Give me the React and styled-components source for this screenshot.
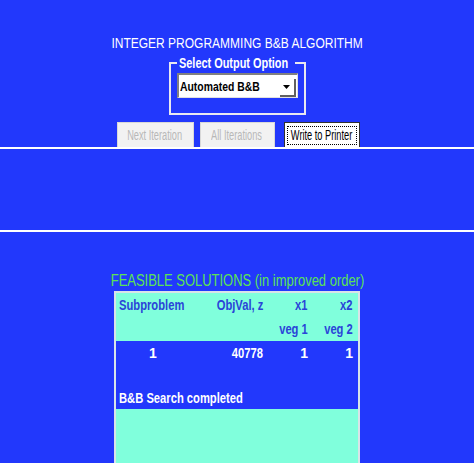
import React from "react";
import styled, { createGlobalStyle } from "styled-components";

const columns = ["74px", "73px", "45px", "45px"];

const GlobalStyle = createGlobalStyle`
  html, body {
    margin: 0;
    padding: 0;
    background: #2238fc;
  }
`;

const Page = styled.div`
  width: 474px;
  height: 463px;
  overflow: hidden;
  background: #2238fc;
  font-family: "Liberation Sans", Arial, sans-serif;
  display: flex;
  flex-direction: column;
  align-items: center;
`;

// condensed look of the original UI font
const Narrow = styled.span`
  display: inline-block;
  white-space: nowrap;
  transform: scaleX(${(p) => p.scale || 0.8});
  transform-origin: ${(p) => p.origin || "center"};
`;

const Title = styled.h1`
  margin: 34px 0 0;
  font-size: 15px;
  font-weight: normal;
  color: #ffffff;
  line-height: 18px;
`;

const OptionBox = styled.fieldset`
  box-sizing: border-box;
  width: 135px;
  height: 59px;
  margin: 4px 0 0;
  padding: 0 6px;
  border: 2px solid #e8e8f0;
  display: flex;
  justify-content: center;
`;

const Legend = styled.legend`
  width: 114px;
  padding: 0 2px;
  font-size: 14px;
  font-weight: bold;
  color: #ffffff;
  line-height: 14px;
  white-space: nowrap;
`;

const SelectBox = styled.div`
  box-sizing: border-box;
  width: 121px;
  height: 25px;
  margin-top: 3px;
  background: #ffffff;
  border-top: 2px solid #808080;
  border-left: 2px solid #808080;
  border-right: 1px solid #e0e0e0;
  border-bottom: 1px solid #e0e0e0;
  display: flex;
  align-items: center;
  justify-content: space-between;
  padding-left: 1px;
`;

const SelectText = styled.span`
  font-size: 13px;
  font-weight: bold;
  color: #000000;
`;

const ArrowButton = styled.span`
  box-sizing: border-box;
  width: 16px;
  height: 18px;
  margin: 3px 1px 0 0;
  background: #ffffff;
  border-right: 2px solid #606060;
  border-bottom: 2px solid #606060;
  display: flex;
  align-items: center;
  justify-content: center;
`;

const ButtonRow = styled.div`
  display: flex;
  align-items: flex-end;
  gap: 6px;
  margin-top: 7px;
  margin-left: 2px;
`;

const Button = styled.button`
  box-sizing: border-box;
  width: ${(p) => p.width}px;
  height: 25px;
  margin-right: ${(p) => p.gapAfter || 0}px;
  background: ${(p) => (p.focused ? "#ffffff" : "#f2f2f2")};
  border: 1px solid ${(p) => (p.focused ? "#303030" : "#d8d8d8")};
  border-bottom: none;
  font-family: "Liberation Sans", Arial, sans-serif;
  font-size: 14px;
  color: ${(p) => (p.disabled ? "#b8b8b8" : "#000000")};
  padding: 2px 2px 2px;
  display: flex;
  align-items: center;
  justify-content: center;
  overflow: hidden;
`;

const FocusRing = styled.span`
  box-sizing: border-box;
  width: 100%;
  display: flex;
  justify-content: center;
  border: 1px dotted #000000;
  line-height: 17px;
`;

const Divider = styled.div`
  width: 100%;
  height: 2px;
  background: #ffffff;
  margin-top: ${(p) => p.top}px;
`;

const Heading = styled.h2`
  margin: 40px 0 0;
  font-size: 16px;
  font-weight: normal;
  color: #5ce254;
  line-height: 18px;
  margin-left: 1px;
`;

const Panel = styled.div`
  box-sizing: border-box;
  width: 246px;
  flex: 1;
  margin-top: 1px;
  background: #80ffdc;
  border: 2px solid #d8e4e8;
  border-bottom: none;
`;

const Row = styled.div`
  display: grid;
  grid-template-columns: ${columns.join(" ")};
  height: ${(p) => p.height}px;
  align-items: center;
  font-size: 14px;
  font-weight: bold;
  color: ${(p) => (p.inverse ? "#ffffff" : "#2a44d8")};
`;

const Cell = styled.span`
  text-align: ${(p) => p.align || "right"};
  padding-left: ${(p) => p.pad || 0}px;
`;

const ResultBlock = styled.div`
  background: #2238fc;
  height: 68px;
  display: flex;
  flex-direction: column;
`;

const Status = styled.div`
  margin-top: 25px;
  padding-left: 3px;
  font-size: 14px;
  font-weight: bold;
  color: #ffffff;
`;

export default function App() {
  return (
    <>
      <GlobalStyle />
      <Page>
        <Title>
          <Narrow>INTEGER PROGRAMMING B&amp;B ALGORITHM</Narrow>
        </Title>
        <OptionBox>
          <Legend>
            <Narrow origin="left" scale={0.78}>Select Output Option</Narrow>
          </Legend>
          <SelectBox>
            <SelectText>
              <Narrow origin="left" scale={0.8}>Automated B&amp;B</Narrow>
            </SelectText>
            <ArrowButton>
              <svg width="7" height="4" viewBox="0 0 7 4">
                <path d="M0 0 H7 L3.5 4 Z" fill="#000" />
              </svg>
            </ArrowButton>
          </SelectBox>
        </OptionBox>
        <ButtonRow>
          <Button width={77} disabled>
            <Narrow scale={0.66}>Next Iteration</Narrow>
          </Button>
          <Button width={75} disabled gapAfter={3}>
            <Narrow scale={0.66}>All Iterations</Narrow>
          </Button>
          <Button width={76} focused>
            <FocusRing>
              <Narrow scale={0.66}>Write to Printer</Narrow>
            </FocusRing>
          </Button>
        </ButtonRow>
        <Divider top={0} />
        <Divider top={81} />
        <Heading>
          <Narrow scale={0.81}>FEASIBLE SOLUTIONS (in improved order)</Narrow>
        </Heading>
        <Panel>
          <Row height={24}>
            <Cell align="left" pad={3}>
              <Narrow origin="left">Subproblem</Narrow>
            </Cell>
            <Cell>
              <Narrow origin="right">ObjVal, z</Narrow>
            </Cell>
            <Cell>
              <Narrow origin="right">x1</Narrow>
            </Cell>
            <Cell>
              <Narrow origin="right">x2</Narrow>
            </Cell>
          </Row>
          <Row height={24}>
            <Cell />
            <Cell />
            <Cell>
              <Narrow origin="right">veg 1</Narrow>
            </Cell>
            <Cell>
              <Narrow origin="right">veg 2</Narrow>
            </Cell>
          </Row>
          <ResultBlock>
            <Row height={24} inverse>
              <Cell align="center">1</Cell>
              <Cell>
                <Narrow origin="right">40778</Narrow>
              </Cell>
              <Cell>1</Cell>
              <Cell>1</Cell>
            </Row>
            <Status>
              <Narrow origin="left">B&amp;B Search completed</Narrow>
            </Status>
          </ResultBlock>
        </Panel>
      </Page>
    </>
  );
}
